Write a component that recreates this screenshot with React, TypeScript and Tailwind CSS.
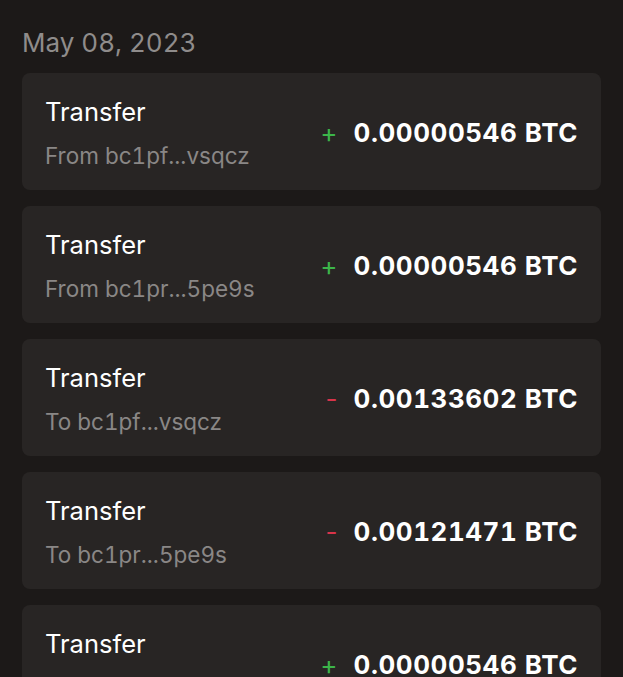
import React from "react";

type Tx = { dir: "in" | "out"; addr: string; amount: string };

const txs: Tx[] = [
  { dir: "in", addr: "From bc1pf...vsqcz", amount: "0.00000546 BTC" },
  { dir: "in", addr: "From bc1pr...5pe9s", amount: "0.00000546 BTC" },
  { dir: "out", addr: "To bc1pf...vsqcz", amount: "0.00133602 BTC" },
  { dir: "out", addr: "To bc1pr...5pe9s", amount: "0.00121471 BTC" },
  { dir: "in", addr: "From bc1pf...vsqcz", amount: "0.00000546 BTC" },
];

export default function App() {
  return (
    <div
      className="w-[623px] h-[677px] overflow-hidden bg-[#1c1918] px-[22px] pt-[26px]"
      style={{ fontFamily: "Inter, 'Noto Sans', sans-serif" }}
    >
      <div className="text-[26px] leading-[34px] text-[#8f8c8b] mb-[13px] tabular-nums">May 08, 2023</div>
      <div className="flex flex-col gap-[16px]">
        {txs.map((t, i) => (
          <div
            key={i}
            className="h-[117px] shrink-0 rounded-[8px] bg-[#282524] pl-[23px] pr-[23px] flex items-center justify-between"
          >
            <div className="flex flex-col pt-[3px]">
              <div className="text-[25.5px] leading-[32px] text-white">Transfer</div>
              <div className="text-[22.5px] leading-[30px] text-[#8a8786] mt-[13px] tabular-nums">{t.addr}</div>
            </div>
            <div className="flex items-center pt-[2px]">
              {t.dir === "in" ? (
                <span className="text-[26px] leading-[32px] text-[#3cb54a] mr-[16px]">+</span>
              ) : (
                <span className="text-[26px] leading-[32px] text-[#d8344a] mr-[16px]">-</span>
              )}
              <span className="text-[26px] leading-[32px] font-bold text-white tabular-nums tracking-[0.55px]">{t.amount}</span>
            </div>
          </div>
        ))}
      </div>
    </div>
  );
}
